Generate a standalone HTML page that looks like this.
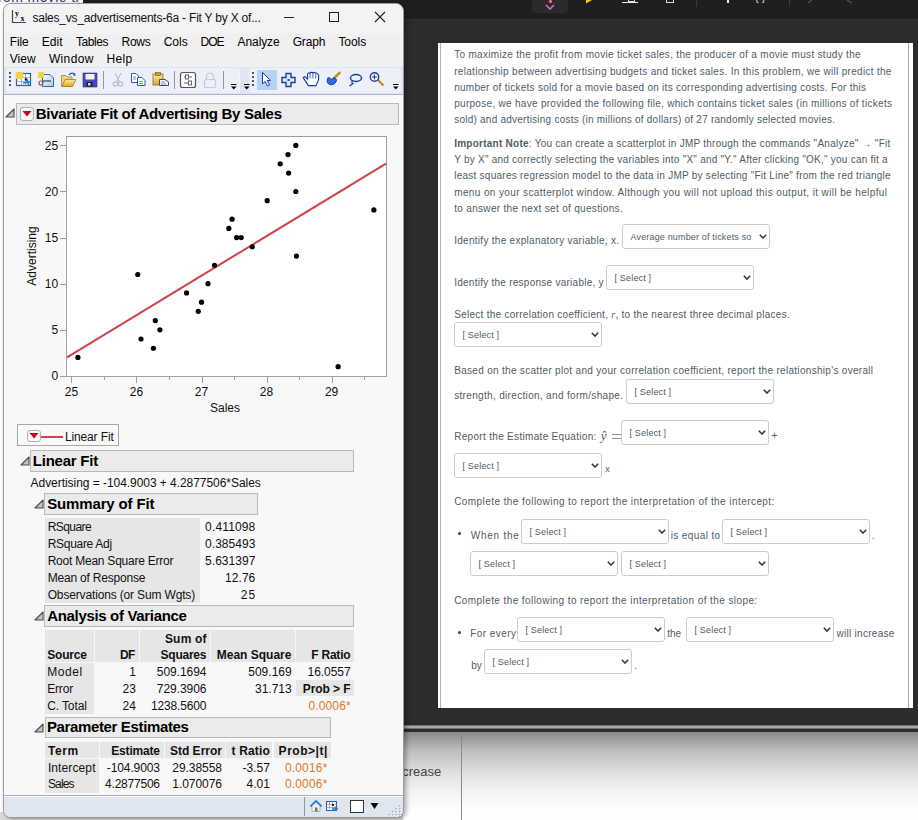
<!DOCTYPE html><html><head><meta charset="utf-8"><style>
html,body{margin:0;padding:0}
body{width:918px;height:820px;overflow:hidden;position:relative;background:#2c2c2c;font-family:"Liberation Sans",sans-serif}
div{box-sizing:border-box}
.sel{position:absolute;height:25px;width:148px;border:1px solid #c7cdd1;border-radius:3px;background:#fff}
.sel span{position:absolute;left:7px;top:5px;font-size:9.5px;color:#2d3b45;white-space:nowrap}
.sel svg{position:absolute;right:6px;top:9px}
</style></head><body>
<div style="position:absolute;left:0px;top:0px;width:918px;height:19px;background:#1f1f1f"></div>
<div style="position:absolute;left:403px;top:19px;width:515px;height:1px;background:#303030"></div>
<div style="position:absolute;left:0px;top:0px;width:83px;height:12px;background:#fff"></div>
<div style="position:absolute;left:0px;top:0px;width:12px;height:820px;background:#fff"></div>
<div style="position:absolute;left:0px;top:812px;width:403px;height:8px;background:#d9d9d9"></div>
<div style="position:absolute;left:0;top:0;width:83px;height:3px;overflow:hidden"><div style="position:absolute;left:-2px;top:-11px;font-size:14px;line-height:16px;color:#3b3b6b;white-space:nowrap;letter-spacing:0.4px">rom movie ti</div></div>
<div style="position:absolute;left:532px;top:0px;width:36px;height:13px;background:#2b2b2b;border-radius:0 0 4px 4px"></div>
<div style="position:absolute;left:549px;top:0px;width:2.5px;height:2.5px;background:#ff7070;border-radius:50%"></div>
<svg style="position:absolute;left:545px;top:4px" width="10" height="7"><path d="M1 1 L5 5 L9 1" fill="none" stroke="#d47ae0" stroke-width="1.3"/></svg>
<svg style="position:absolute;left:585px;top:0" width="8" height="4"><path d="M1 0 L7 0 L1 3.5 Z" fill="#f0d020"/></svg>
<div style="position:absolute;left:622px;top:2px;width:16px;height:1px;background:#eee"></div>
<div style="position:absolute;left:628px;top:0px;width:7px;height:2px;border:1px solid #ddd;border-top:none"></div>
<div style="position:absolute;left:666px;top:0px;width:8px;height:3px;border:1px solid #ddd;border-top:none"></div>
<div style="position:absolute;left:696px;top:0px;width:1px;height:7px;background:#3c3c3c"></div>
<div style="position:absolute;left:727px;top:0px;width:1.5px;height:3px;background:#eee"></div>
<div style="position:absolute;left:755px;top:-9px;font-size:11px;color:#ddd;letter-spacing:3px">{}</div>
<div style="position:absolute;left:789px;top:0px;width:1px;height:6px;background:#3c3c3c"></div>
<svg style="position:absolute;left:806px;top:0" width="50" height="5"><path d="M2 3 L6 0 M41 0 L46 3" stroke="#666" stroke-width="1"/></svg>
<div style="position:absolute;left:438px;top:43px;width:475px;height:665px;background:#fff"></div>
<div style="position:absolute;left:440px;top:43px;width:1px;height:665px;background:#b4b4b4"></div>
<div style="position:absolute;left:908px;top:43px;width:1px;height:665px;background:#a8a8a8"></div>
<div style="position:absolute;left:403px;top:725px;width:515px;height:4px;background:linear-gradient(#555,#c4c4c4 50%,#555)"></div>
<div style="position:absolute;left:403px;top:732px;width:515px;height:88px;background:linear-gradient(#888 0%,#bcbcbc 20%,#dcdcdc 43%,#f2f2f2 66%,#fdfdfd 89%,#fff 100%)"></div>
<div style="position:absolute;left:461px;top:732px;width:1px;height:88px;background:#8a8a8a"></div>
<div style="position:absolute;top:765.24px;font-size:13px;line-height:14.95px;color:#444;font-weight:normal;white-space:nowrap;left:402.20px;">crease</div>
<div style="position:absolute;top:48.95px;font-size:10px;line-height:11.50px;color:#505b65;font-weight:normal;white-space:nowrap;letter-spacing:0.309px;left:454.20px;">To maximize the profit from movie ticket sales, the producer of a movie must study the</div>
<div style="position:absolute;top:65.95px;font-size:10px;line-height:11.50px;color:#505b65;font-weight:normal;white-space:nowrap;letter-spacing:0.305px;left:454.20px;">relationship between advertising budgets and ticket sales. In this problem, we will predict the</div>
<div style="position:absolute;top:81.95px;font-size:10px;line-height:11.50px;color:#505b65;font-weight:normal;white-space:nowrap;letter-spacing:0.266px;left:454.20px;">number of tickets sold for a movie based on its corresponding advertising costs. For this</div>
<div style="position:absolute;top:97.95px;font-size:10px;line-height:11.50px;color:#505b65;font-weight:normal;white-space:nowrap;letter-spacing:0.293px;left:454.20px;">purpose, we have provided the following file, which contains ticket sales (in millions of tickets</div>
<div style="position:absolute;top:113.95px;font-size:10px;line-height:11.50px;color:#505b65;font-weight:normal;white-space:nowrap;letter-spacing:0.235px;left:454.20px;">sold) and advertising costs (in millions of dollars) of 27 randomly selected movies.</div>
<div style="position:absolute;top:137.95px;font-size:10px;line-height:11.50px;color:#505b65;font-weight:normal;white-space:nowrap;letter-spacing:0.251px;left:454.20px;"><b>Important Note</b>: You can create a scatterplot in JMP through the commands "Analyze" &#8594; "Fit</div>
<div style="position:absolute;top:153.95px;font-size:10px;line-height:11.50px;color:#505b65;font-weight:normal;white-space:nowrap;letter-spacing:0.239px;left:454.20px;">Y by X" and correctly selecting the variables into "X" and "Y." After clicking "OK," you can fit a</div>
<div style="position:absolute;top:169.95px;font-size:10px;line-height:11.50px;color:#505b65;font-weight:normal;white-space:nowrap;letter-spacing:0.253px;left:454.20px;">least squares regression model to the data in JMP by selecting "Fit Line" from the red triangle</div>
<div style="position:absolute;top:186.95px;font-size:10px;line-height:11.50px;color:#505b65;font-weight:normal;white-space:nowrap;letter-spacing:0.384px;left:454.20px;">menu on your scatterplot window. Although you will not upload this output, it will be helpful</div>
<div style="position:absolute;top:202.95px;font-size:10px;line-height:11.50px;color:#505b65;font-weight:normal;white-space:nowrap;letter-spacing:0.319px;left:454.20px;">to answer the next set of questions.</div>
<div style="position:absolute;top:234.95px;font-size:10px;line-height:11.50px;color:#505b65;font-weight:normal;white-space:nowrap;letter-spacing:0.285px;left:454.20px;">Identify the explanatory variable, x.</div>
<div class="sel" style="left:622px;top:224px;width:148px"></div>
<div style="position:absolute;top:231.85px;font-size:9px;line-height:10.35px;color:#505b65;font-weight:normal;white-space:nowrap;letter-spacing:0.166px;left:630.50px;">Average number of tickets so</div>
<svg style="position:absolute;left:759px;top:234px" width="8" height="5" viewBox="0 0 8 5"><path d="M0.8 0.8 L4 4 L7.2 0.8" stroke="#2d3b45" stroke-width="1.6" fill="none"/></svg>
<div style="position:absolute;top:276.95px;font-size:10px;line-height:11.50px;color:#505b65;font-weight:normal;white-space:nowrap;letter-spacing:0.256px;left:454.20px;">Identify the response variable, y</div>
<div class="sel" style="left:606px;top:265px;width:148px"></div>
<div style="position:absolute;top:272.86px;font-size:9px;line-height:10.35px;color:#505b65;font-weight:normal;white-space:nowrap;letter-spacing:0.176px;left:614.50px;">[ Select ]</div>
<svg style="position:absolute;left:743px;top:275px" width="8" height="5" viewBox="0 0 8 5"><path d="M0.8 0.8 L4 4 L7.2 0.8" stroke="#2d3b45" stroke-width="1.6" fill="none"/></svg>
<div style="position:absolute;top:308.95px;font-size:10px;line-height:11.50px;color:#505b65;font-weight:normal;white-space:nowrap;letter-spacing:0.277px;left:454.20px;">Select the correlation coefficient, <i style="font-family:Liberation Serif">r</i>, to the nearest three decimal places.</div>
<div class="sel" style="left:454px;top:322px;width:148px"></div>
<div style="position:absolute;top:329.86px;font-size:9px;line-height:10.35px;color:#505b65;font-weight:normal;white-space:nowrap;letter-spacing:0.176px;left:462.50px;">[ Select ]</div>
<svg style="position:absolute;left:591px;top:332px" width="8" height="5" viewBox="0 0 8 5"><path d="M0.8 0.8 L4 4 L7.2 0.8" stroke="#2d3b45" stroke-width="1.6" fill="none"/></svg>
<div style="position:absolute;top:364.95px;font-size:10px;line-height:11.50px;color:#505b65;font-weight:normal;white-space:nowrap;letter-spacing:0.305px;left:454.20px;">Based on the scatter plot and your correlation coefficient, report the relationship's overall</div>
<div style="position:absolute;top:389.95px;font-size:10px;line-height:11.50px;color:#505b65;font-weight:normal;white-space:nowrap;letter-spacing:0.328px;left:454.20px;">strength, direction, and form/shape.</div>
<div class="sel" style="left:626px;top:379px;width:148px"></div>
<div style="position:absolute;top:386.86px;font-size:9px;line-height:10.35px;color:#505b65;font-weight:normal;white-space:nowrap;letter-spacing:0.176px;left:634.50px;">[ Select ]</div>
<svg style="position:absolute;left:763px;top:389px" width="8" height="5" viewBox="0 0 8 5"><path d="M0.8 0.8 L4 4 L7.2 0.8" stroke="#2d3b45" stroke-width="1.6" fill="none"/></svg>
<div style="position:absolute;top:430.95px;font-size:10px;line-height:11.50px;color:#505b65;font-weight:normal;white-space:nowrap;letter-spacing:0.314px;left:454.20px;">Report the Estimate Equation:</div>
<div style="position:absolute;top:429.24px;font-size:13px;line-height:14.95px;color:#505b65;font-weight:normal;white-space:nowrap;font-family:'Liberation Serif';left:600.70px;"><i>ŷ</i></div>
<svg style="position:absolute;left:611px;top:433px" width="11" height="8"><path d="M1 1.5 H10 M1 5.5 H10" stroke="#8a9299" stroke-width="1"/></svg>
<div class="sel" style="left:621px;top:420px;width:148px"></div>
<div style="position:absolute;top:427.86px;font-size:9px;line-height:10.35px;color:#505b65;font-weight:normal;white-space:nowrap;letter-spacing:0.176px;left:629.50px;">[ Select ]</div>
<svg style="position:absolute;left:758px;top:430px" width="8" height="5" viewBox="0 0 8 5"><path d="M0.8 0.8 L4 4 L7.2 0.8" stroke="#2d3b45" stroke-width="1.6" fill="none"/></svg>
<div style="position:absolute;top:429.05px;font-size:11px;line-height:12.65px;color:#505b65;font-weight:normal;white-space:nowrap;left:771.20px;">+</div>
<div class="sel" style="left:454px;top:453px;width:148px"></div>
<div style="position:absolute;top:460.86px;font-size:9px;line-height:10.35px;color:#505b65;font-weight:normal;white-space:nowrap;letter-spacing:0.176px;left:462.50px;">[ Select ]</div>
<svg style="position:absolute;left:591px;top:463px" width="8" height="5" viewBox="0 0 8 5"><path d="M0.8 0.8 L4 4 L7.2 0.8" stroke="#2d3b45" stroke-width="1.6" fill="none"/></svg>
<div style="position:absolute;top:463.86px;font-size:9px;line-height:10.35px;color:#505b65;font-weight:normal;white-space:nowrap;left:605.20px;">x</div>
<div style="position:absolute;top:495.95px;font-size:10px;line-height:11.50px;color:#505b65;font-weight:normal;white-space:nowrap;letter-spacing:0.433px;left:454.20px;">Complete the following to report the interpretation of the intercept:</div>
<div style="position:absolute;left:458px;top:532px;width:3px;height:3px;background:#2d3b45;border-radius:50%"></div>
<div style="position:absolute;top:529.95px;font-size:10px;line-height:11.50px;color:#505b65;font-weight:normal;white-space:nowrap;letter-spacing:0.755px;left:470.80px;">When the</div>
<div class="sel" style="left:521px;top:519px;width:148px"></div>
<div style="position:absolute;top:526.86px;font-size:9px;line-height:10.35px;color:#505b65;font-weight:normal;white-space:nowrap;letter-spacing:0.176px;left:529.50px;">[ Select ]</div>
<svg style="position:absolute;left:658px;top:529px" width="8" height="5" viewBox="0 0 8 5"><path d="M0.8 0.8 L4 4 L7.2 0.8" stroke="#2d3b45" stroke-width="1.6" fill="none"/></svg>
<div style="position:absolute;top:529.95px;font-size:10px;line-height:11.50px;color:#505b65;font-weight:normal;white-space:nowrap;letter-spacing:0.391px;left:670.70px;">is equal to</div>
<div class="sel" style="left:722px;top:519px;width:148px"></div>
<div style="position:absolute;top:526.86px;font-size:9px;line-height:10.35px;color:#505b65;font-weight:normal;white-space:nowrap;letter-spacing:0.176px;left:730.50px;">[ Select ]</div>
<svg style="position:absolute;left:859px;top:529px" width="8" height="5" viewBox="0 0 8 5"><path d="M0.8 0.8 L4 4 L7.2 0.8" stroke="#2d3b45" stroke-width="1.6" fill="none"/></svg>
<div style="position:absolute;top:529.95px;font-size:10px;line-height:11.50px;color:#505b65;font-weight:normal;white-space:nowrap;left:871.70px;">.</div>
<div class="sel" style="left:470px;top:551px;width:148px"></div>
<div style="position:absolute;top:558.86px;font-size:9px;line-height:10.35px;color:#505b65;font-weight:normal;white-space:nowrap;letter-spacing:0.176px;left:478.50px;">[ Select ]</div>
<svg style="position:absolute;left:607px;top:561px" width="8" height="5" viewBox="0 0 8 5"><path d="M0.8 0.8 L4 4 L7.2 0.8" stroke="#2d3b45" stroke-width="1.6" fill="none"/></svg>
<div class="sel" style="left:621px;top:551px;width:148px"></div>
<div style="position:absolute;top:558.86px;font-size:9px;line-height:10.35px;color:#505b65;font-weight:normal;white-space:nowrap;letter-spacing:0.176px;left:629.50px;">[ Select ]</div>
<svg style="position:absolute;left:758px;top:561px" width="8" height="5" viewBox="0 0 8 5"><path d="M0.8 0.8 L4 4 L7.2 0.8" stroke="#2d3b45" stroke-width="1.6" fill="none"/></svg>
<div style="position:absolute;top:594.95px;font-size:10px;line-height:11.50px;color:#505b65;font-weight:normal;white-space:nowrap;letter-spacing:0.417px;left:454.20px;">Complete the following to report the interpretation of the slope:</div>
<div style="position:absolute;left:458px;top:631px;width:3px;height:3px;background:#2d3b45;border-radius:50%"></div>
<div style="position:absolute;top:627.95px;font-size:10px;line-height:11.50px;color:#505b65;font-weight:normal;white-space:nowrap;letter-spacing:0.446px;left:470.20px;">For every</div>
<div class="sel" style="left:517px;top:617px;width:148px"></div>
<div style="position:absolute;top:624.86px;font-size:9px;line-height:10.35px;color:#505b65;font-weight:normal;white-space:nowrap;letter-spacing:0.176px;left:525.50px;">[ Select ]</div>
<svg style="position:absolute;left:654px;top:627px" width="8" height="5" viewBox="0 0 8 5"><path d="M0.8 0.8 L4 4 L7.2 0.8" stroke="#2d3b45" stroke-width="1.6" fill="none"/></svg>
<div style="position:absolute;top:627.95px;font-size:10px;line-height:11.50px;color:#505b65;font-weight:normal;white-space:nowrap;left:667.20px;">the</div>
<div class="sel" style="left:686px;top:617px;width:148px"></div>
<div style="position:absolute;top:624.86px;font-size:9px;line-height:10.35px;color:#505b65;font-weight:normal;white-space:nowrap;letter-spacing:0.176px;left:694.50px;">[ Select ]</div>
<svg style="position:absolute;left:823px;top:627px" width="8" height="5" viewBox="0 0 8 5"><path d="M0.8 0.8 L4 4 L7.2 0.8" stroke="#2d3b45" stroke-width="1.6" fill="none"/></svg>
<div style="position:absolute;top:627.95px;font-size:10px;line-height:11.50px;color:#505b65;font-weight:normal;white-space:nowrap;letter-spacing:0.286px;left:836.50px;">will increase</div>
<div style="position:absolute;top:659.95px;font-size:10px;line-height:11.50px;color:#505b65;font-weight:normal;white-space:nowrap;left:471.20px;">by</div>
<div class="sel" style="left:484px;top:649px;width:148px"></div>
<div style="position:absolute;top:656.86px;font-size:9px;line-height:10.35px;color:#505b65;font-weight:normal;white-space:nowrap;letter-spacing:0.176px;left:492.50px;">[ Select ]</div>
<svg style="position:absolute;left:621px;top:659px" width="8" height="5" viewBox="0 0 8 5"><path d="M0.8 0.8 L4 4 L7.2 0.8" stroke="#2d3b45" stroke-width="1.6" fill="none"/></svg>
<div style="position:absolute;top:659.95px;font-size:10px;line-height:11.50px;color:#505b65;font-weight:normal;white-space:nowrap;left:634.20px;">.</div>
<div style="position:absolute;left:3px;top:3px;width:401px;height:815px;border:1px solid #9a9a9a;border-radius:8px;background:#f8f8f8;overflow:hidden;box-shadow:2px 1px 5px rgba(0,0,0,0.35)">
<div style="position:absolute;left:0px;top:0px;width:400px;height:30px;background:#f3f3f3"></div>
<div style="position:absolute;left:0px;top:30px;width:400px;height:34px;background:#f0f0f0"></div>
<div style="position:absolute;left:0px;top:791px;width:400px;height:24px;background:#e0e6f0;border-top:1px solid #a5b0d0;box-shadow:inset 0 1px 0 #fff"></div>
</div>
<div style="position:absolute;top:12.14px;font-size:12px;line-height:13.80px;color:#111;font-weight:normal;white-space:nowrap;letter-spacing:-0.211px;left:32.40px;">sales_vs_advertisements-6a - Fit Y by X of...</div>
<svg style="position:absolute;left:10px;top:8px" width="20" height="17"><path d="M2.5 2 V14.5 H16" fill="none" stroke="#2a4a80" stroke-width="1.2"/><text x="5" y="7.5" font-family="Liberation Serif" font-weight="bold" font-size="8" fill="#000">y</text><text x="10.5" y="13" font-family="Liberation Serif" font-weight="bold" font-size="8" fill="#000">x</text></svg>
<div style="position:absolute;top:36.14px;font-size:12px;line-height:13.80px;color:#000;font-weight:normal;white-space:nowrap;letter-spacing:-0.115px;left:9.70px;">File</div>
<div style="position:absolute;top:36.14px;font-size:12px;line-height:13.80px;color:#000;font-weight:normal;white-space:nowrap;letter-spacing:0.038px;left:41.70px;">Edit</div>
<div style="position:absolute;top:36.14px;font-size:12px;line-height:13.80px;color:#000;font-weight:normal;white-space:nowrap;letter-spacing:-0.398px;left:75.90px;">Tables</div>
<div style="position:absolute;top:36.14px;font-size:12px;line-height:13.80px;color:#000;font-weight:normal;white-space:nowrap;letter-spacing:-0.305px;left:121.60px;">Rows</div>
<div style="position:absolute;top:36.14px;font-size:12px;line-height:13.80px;color:#000;font-weight:normal;white-space:nowrap;letter-spacing:-0.005px;left:163.70px;">Cols</div>
<div style="position:absolute;top:36.14px;font-size:12px;line-height:13.80px;color:#000;font-weight:normal;white-space:nowrap;letter-spacing:-0.958px;left:200.50px;">DOE</div>
<div style="position:absolute;top:36.14px;font-size:12px;line-height:13.80px;color:#000;font-weight:normal;white-space:nowrap;letter-spacing:-0.101px;left:237.60px;">Analyze</div>
<div style="position:absolute;top:36.14px;font-size:12px;line-height:13.80px;color:#000;font-weight:normal;white-space:nowrap;letter-spacing:-0.165px;left:292.70px;">Graph</div>
<div style="position:absolute;top:36.14px;font-size:12px;line-height:13.80px;color:#000;font-weight:normal;white-space:nowrap;letter-spacing:-0.054px;left:338.40px;">Tools</div>
<div style="position:absolute;top:53.14px;font-size:12px;line-height:13.80px;color:#000;font-weight:normal;white-space:nowrap;letter-spacing:0.068px;left:9.70px;">View</div>
<div style="position:absolute;top:53.14px;font-size:12px;line-height:13.80px;color:#000;font-weight:normal;white-space:nowrap;letter-spacing:0.362px;left:48.90px;">Window</div>
<div style="position:absolute;top:53.14px;font-size:12px;line-height:13.80px;color:#000;font-weight:normal;white-space:nowrap;letter-spacing:0.304px;left:106.60px;">Help</div>
<div style="position:absolute;left:284px;top:17px;width:10px;height:1px;background:#222"></div>
<div style="position:absolute;left:329px;top:12px;width:10px;height:10px;border:1px solid #222"></div>
<svg style="position:absolute;left:374px;top:11px" width="12" height="12"><path d="M1 1 L11 11 M11 1 L1 11" stroke="#222" stroke-width="1.1"/></svg>
<div style="position:absolute;left:4px;top:67px;width:399px;height:28px;background:#dfe5f3;border-bottom:1px solid #a9b4d6"></div>
<div style="position:absolute;left:6px;top:68px;width:233px;height:25px;background:#edf0f8;border-radius:4px"></div>
<div style="position:absolute;left:249px;top:68px;width:152px;height:25px;background:#edf0f8;border-radius:4px"></div>
<div style="position:absolute;left:239px;top:68px;width:1px;height:25px;background:#f4f6fb"></div>
<div style="position:absolute;left:9px;top:72px;width:2px;height:2px;background:#555"></div>
<div style="position:absolute;left:9px;top:76px;width:2px;height:2px;background:#555"></div>
<div style="position:absolute;left:9px;top:80px;width:2px;height:2px;background:#555"></div>
<div style="position:absolute;left:9px;top:84px;width:2px;height:2px;background:#555"></div>
<div style="position:absolute;left:252px;top:72px;width:2px;height:2px;background:#555"></div>
<div style="position:absolute;left:252px;top:76px;width:2px;height:2px;background:#555"></div>
<div style="position:absolute;left:252px;top:80px;width:2px;height:2px;background:#555"></div>
<div style="position:absolute;left:252px;top:84px;width:2px;height:2px;background:#555"></div>
<div style="position:absolute;left:257px;top:70px;width:20px;height:20px;background:#b3d4f7"></div>
<svg style="position:absolute;left:0;top:0" width="918" height="100"><defs><linearGradient id="fy" x1="0" y1="0" x2="0" y2="1"><stop offset="0" stop-color="#fbe7a0"/><stop offset="1" stop-color="#e0a820"/></linearGradient><linearGradient id="dc" x1="0" y1="0" x2="1" y2="1"><stop offset="0" stop-color="#ffffff"/><stop offset="1" stop-color="#a9c8ec"/></linearGradient></defs><rect x="16.5" y="73.5" width="14" height="12" fill="#fff" stroke="#1e5fb0" stroke-width="1.2"/><path d="M16.5 77.5 H30.5 M16.5 81.5 H30.5" stroke="#f08080" stroke-width="0.8"/><path d="M21.5 73.5 V85.5 M25.5 73.5 V85.5" stroke="#6a9ad8" stroke-width="0.8"/><rect x="16" y="72" width="7" height="7" fill="#f5d24a"/><circle cx="26" cy="79.5" r="1.3" fill="#000"/><path d="M23 83 L31 82 M27 79 L29 86" stroke="#1e7fd0" stroke-width="1.6"/><path d="M42.5 74.5 H50 L53.5 78 V86.5 H42.5 Z" fill="url(#dc)" stroke="#2a6ab8" stroke-width="1"/><rect x="38" y="72" width="6" height="6" fill="#f5d24a"/><circle cx="41" cy="83" r="2" fill="none" stroke="#666" stroke-width="1.2"/><path d="M42 81 L51 81" stroke="#555" stroke-width="1.4"/><path d="M61.5 75.5 H66 L67.5 77 H72 V86.5 H61.5 Z" fill="#f2d47a" stroke="#a08030" stroke-width="0.8"/><path d="M62 86.5 L65 79.5 H76 L72.5 86.5 Z" fill="url(#fy)" stroke="#a07820" stroke-width="0.8"/><path d="M69 75 Q72 71.5 75 74.5" stroke="#2a5a9a" stroke-width="1.3" fill="none"/><path d="M74 72.5 L76 75.5 L73 75.5 Z" fill="#2a5a9a"/><rect x="83" y="73" width="14" height="14" fill="#4848b8" stroke="#303090" stroke-width="0.6"/><rect x="85.5" y="74" width="9" height="5.5" fill="#eef2ff"/><rect x="86.5" y="82" width="6" height="4.5" fill="#222"/><rect x="88" y="83" width="2.5" height="2.5" fill="#ddd"/><line x1="103.5" y1="71" x2="103.5" y2="89" stroke="#8f94ad" stroke-width="1"/><line x1="174.5" y1="71" x2="174.5" y2="89" stroke="#8f94ad" stroke-width="1"/><line x1="223.5" y1="71" x2="223.5" y2="89" stroke="#8f94ad" stroke-width="1"/><path d="M115 73 L119.5 82 M121 73 L116.5 82" stroke="#b8c4d8" stroke-width="1.3"/><circle cx="115.5" cy="84" r="2.2" fill="none" stroke="#b0c0d8" stroke-width="1.2"/><circle cx="120.5" cy="84" r="2.2" fill="none" stroke="#b0c0d8" stroke-width="1.2"/><path d="M131.5 73.5 H136 L138.5 76 V82.5 H131.5 Z" fill="#fff" stroke="#2a5aa8" stroke-width="1"/><path d="M137.5 77.5 H142 L145 80.5 V85.5 H137.5 Z" fill="#fff" stroke="#2a5aa8" stroke-width="1"/><path d="M133 77 H136 M133 79 H136 M139 81.5 H143 M139 83.5 H143" stroke="#4a7ac8" stroke-width="0.8"/><rect x="153" y="74" width="10" height="11" fill="url(#fy)" stroke="#8a6a20" stroke-width="0.8"/><rect x="155.5" y="72.5" width="5" height="3" fill="#c9a040" stroke="#6a5010" stroke-width="0.6"/><path d="M159.5 79.5 H165 L168.5 82 V85.5 H159.5 Z" fill="#eef3fb" stroke="#3a3a5a" stroke-width="0.9"/><path d="M161 82 H165 M161 84 H166" stroke="#5a7ab8" stroke-width="0.7"/><rect x="180.5" y="72.5" width="15" height="15" rx="2" fill="#fff" stroke="#555" stroke-width="1.2"/><path d="M184 77 H192 M184 83 H192" stroke="#666" stroke-width="1"/><rect x="185.5" y="75" width="3" height="4" fill="#fff" stroke="#555" stroke-width="0.9"/><rect x="188.5" y="81" width="3" height="4" fill="#fff" stroke="#555" stroke-width="0.9"/><rect x="204.5" y="79.5" width="11" height="8" rx="1" fill="none" stroke="#c9cbd2" stroke-width="1.2"/><path d="M206.5 79.5 V76.5 A3.5 3.5 0 0 1 213.5 76.5 V79.5" fill="none" stroke="#c9cbd2" stroke-width="1.2"/><path d="M231 84.5 H236.5" stroke="#000" stroke-width="1"/><path d="M231 86.5 H236.5 L233.75 89.5 Z" fill="#000"/><path d="M244 84.5 H249.5" stroke="#000" stroke-width="1"/><path d="M244 86.5 H249.5 L246.75 89.5 Z" fill="#000"/><path d="M393 84.5 H398.5" stroke="#000" stroke-width="1"/><path d="M393 86.5 H398.5 L395.75 89.5 Z" fill="#000"/><path d="M262.5 72.5 L262.5 84 L265 81.5 L267.5 86 L269.5 85 L267.3 80.5 L270.5 80.5 Z" fill="#fff" stroke="#1a3e9a" stroke-width="1"/><path d="M286 73.5 H291 V77.5 H295 V82.5 H291 V86.5 H286 V82.5 H282 V77.5 H286 Z" fill="#dde8f8" stroke="#1a3e9a" stroke-width="1.4"/><rect x="287.5" y="79" width="2" height="2" fill="#1a3e9a"/><path d="M303.2 77.6 L305 76.6 L307.6 79.2 V74 Q308.6 72.2 309.8 73.4 Q311.2 71.6 312.6 73 Q314.2 71.6 315.6 73 Q317.6 72.6 318.6 75.4 V79.6 L316 85.6 H308.4 Z" fill="#fbfbfb" stroke="#1538a8" stroke-width="1.1" stroke-linejoin="round"/><path d="M310 73.6 V78.4 M312.9 73.2 V78.4 M315.7 73.4 V78.4" stroke="#3a60c8" stroke-width="0.9"/><path d="M334 78.2 L339.6 72.8" stroke="#c8901c" stroke-width="2.6" stroke-linecap="round"/><path d="M327.6 78 Q325.8 84.2 331 84.8 Q335.8 84.6 336.6 79.8 L334.4 77.4 Q331.4 80.8 329.4 77.6 Z" fill="#2d6be0" stroke="#0f3aa8" stroke-width="0.9"/><ellipse cx="356" cy="78" rx="5.5" ry="3.5" fill="none" stroke="#1a3e9a" stroke-width="1.4"/><path d="M352.5 80.5 Q351 83 353 83.5 L349.5 86" stroke="#1a3e9a" stroke-width="1.2" fill="none"/><path d="M378 80 L383.5 85.5" stroke="#c08a20" stroke-width="2.2"/><circle cx="374.5" cy="77" r="4.2" fill="#fff" stroke="#1a3e9a" stroke-width="1.4"/><path d="M372 77 H377 M374.5 74.5 V79.5" stroke="#1a3e9a" stroke-width="1.2"/></svg>
<div style="position:absolute;left:16px;top:103px;width:383px;height:22px;background:#ebebeb;border:1px solid #b9b9b9"></div>
<svg style="position:absolute;left:5px;top:108px" width="10" height="10"><path d="M1 9 L9 9 L9 1 Z" fill="#c4c4c4" stroke="#4a4a4a" stroke-width="1.1" stroke-linejoin="round"/></svg>
<div style="position:absolute;left:20px;top:107px;width:14px;height:14px;background:#fafafa;border:1px solid #b0b0b0;border-radius:3px"></div>
<svg style="position:absolute;left:22px;top:111px" width="10" height="6"><path d="M0.5 0 L9.5 0 L5 5.5 Z" fill="#d4001a"/></svg>
<div style="position:absolute;top:105.42px;font-size:15px;line-height:17.25px;color:#000;font-weight:bold;white-space:nowrap;letter-spacing:-0.301px;left:35.80px;">Bivariate Fit of Advertising By Sales</div>
<div style="position:absolute;left:17px;top:424px;width:102px;height:22px;background:#f9f9f9;border:1px solid #a8a8a8"></div>
<div style="position:absolute;left:27px;top:430px;width:14px;height:12px;background:#fafafa;border:1px solid #b0b0b0;border-radius:3px"></div>
<svg style="position:absolute;left:29px;top:433px" width="10" height="6"><path d="M0.5 0 L9.5 0 L5 5.5 Z" fill="#d4001a"/></svg>
<div style="position:absolute;left:41px;top:436px;width:22px;height:2px;background:#d0414f"></div>
<div style="position:absolute;top:431.14px;font-size:12px;line-height:13.80px;color:#111;font-weight:normal;white-space:nowrap;letter-spacing:-0.126px;left:64.90px;">Linear Fit</div>
<div style="position:absolute;left:30px;top:450px;width:324px;height:22px;background:#ebebeb;border:1px solid #b9b9b9"></div>
<svg style="position:absolute;left:20px;top:456px" width="10" height="10"><path d="M1 9 L9 9 L9 1 Z" fill="#c4c4c4" stroke="#4a4a4a" stroke-width="1.1" stroke-linejoin="round"/></svg>
<div style="position:absolute;top:452.43px;font-size:15px;line-height:17.25px;color:#000;font-weight:bold;white-space:nowrap;letter-spacing:-0.235px;left:32.80px;">Linear Fit</div>
<div style="position:absolute;top:477.14px;font-size:12px;line-height:13.80px;color:#111;font-weight:normal;white-space:nowrap;letter-spacing:-0.049px;left:30.60px;">Advertising = -104.9003 + 4.2877506*Sales</div>
<div style="position:absolute;left:44px;top:493px;width:214px;height:22px;background:#ebebeb;border:1px solid #b9b9b9"></div>
<svg style="position:absolute;left:34px;top:499px" width="10" height="10"><path d="M1 9 L9 9 L9 1 Z" fill="#c4c4c4" stroke="#4a4a4a" stroke-width="1.1" stroke-linejoin="round"/></svg>
<div style="position:absolute;top:495.43px;font-size:15px;line-height:17.25px;color:#000;font-weight:bold;white-space:nowrap;letter-spacing:-0.145px;left:47.20px;">Summary of Fit</div>
<div style="position:absolute;left:45px;top:518px;width:155px;height:85px;background:#e6e6e6"></div>
<div style="position:absolute;top:521.14px;font-size:12px;line-height:13.80px;color:#111;font-weight:normal;white-space:nowrap;letter-spacing:-0.562px;left:47.70px;">RSquare</div>
<div style="position:absolute;top:521.14px;font-size:12px;line-height:13.80px;color:#111;font-weight:normal;white-space:nowrap;letter-spacing:0.147px;right:662.55px;">0.411098</div>
<div style="position:absolute;top:538.14px;font-size:12px;line-height:13.80px;color:#111;font-weight:normal;white-space:nowrap;letter-spacing:-0.299px;left:47.70px;">RSquare Adj</div>
<div style="position:absolute;top:538.14px;font-size:12px;line-height:13.80px;color:#111;font-weight:normal;white-space:nowrap;letter-spacing:0.020px;right:662.68px;">0.385493</div>
<div style="position:absolute;top:555.14px;font-size:12px;line-height:13.80px;color:#111;font-weight:normal;white-space:nowrap;letter-spacing:-0.235px;left:47.70px;">Root Mean Square Error</div>
<div style="position:absolute;top:555.14px;font-size:12px;line-height:13.80px;color:#111;font-weight:normal;white-space:nowrap;letter-spacing:0.020px;right:662.68px;">5.631397</div>
<div style="position:absolute;top:572.14px;font-size:12px;line-height:13.80px;color:#111;font-weight:normal;white-space:nowrap;letter-spacing:-0.196px;left:47.70px;">Mean of Response</div>
<div style="position:absolute;top:572.14px;font-size:12px;line-height:13.80px;color:#111;font-weight:normal;white-space:nowrap;letter-spacing:0.067px;right:662.63px;">12.76</div>
<div style="position:absolute;top:589.14px;font-size:12px;line-height:13.80px;color:#111;font-weight:normal;white-space:nowrap;letter-spacing:-0.155px;left:47.70px;">Observations (or Sum Wgts)</div>
<div style="position:absolute;top:589.14px;font-size:12px;line-height:13.80px;color:#111;font-weight:normal;white-space:nowrap;letter-spacing:1.241px;right:661.46px;">25</div>
<div style="position:absolute;left:44px;top:605px;width:310px;height:22px;background:#ebebeb;border:1px solid #b9b9b9"></div>
<svg style="position:absolute;left:34px;top:611px" width="10" height="10"><path d="M1 9 L9 9 L9 1 Z" fill="#c4c4c4" stroke="#4a4a4a" stroke-width="1.1" stroke-linejoin="round"/></svg>
<div style="position:absolute;top:607.42px;font-size:15px;line-height:17.25px;color:#000;font-weight:bold;white-space:nowrap;letter-spacing:-0.327px;left:47.20px;">Analysis of Variance</div>
<div style="position:absolute;left:45px;top:630px;width:49px;height:32px;background:#e6e6e6"></div>
<div style="position:absolute;left:95px;top:630px;width:44px;height:32px;background:#e6e6e6"></div>
<div style="position:absolute;left:140px;top:630px;width:70px;height:32px;background:#e6e6e6"></div>
<div style="position:absolute;left:211px;top:630px;width:84px;height:32px;background:#e6e6e6"></div>
<div style="position:absolute;left:296px;top:630px;width:58px;height:32px;background:#e6e6e6"></div>
<div style="position:absolute;left:45px;top:663px;width:49px;height:51px;background:#e6e6e6"></div>
<div style="position:absolute;left:296px;top:680px;width:58px;height:16px;background:#e6e6e6"></div>
<div style="position:absolute;top:649.14px;font-size:12px;line-height:13.80px;color:#111;font-weight:bold;white-space:nowrap;letter-spacing:-0.198px;left:47.20px;">Source</div>
<div style="position:absolute;top:649.14px;font-size:12px;line-height:13.80px;color:#111;font-weight:bold;white-space:nowrap;letter-spacing:-0.500px;right:783.10px;">DF</div>
<div style="position:absolute;top:633.14px;font-size:12px;line-height:13.80px;color:#111;font-weight:bold;white-space:nowrap;letter-spacing:0.186px;right:711.31px;">Sum of</div>
<div style="position:absolute;top:649.14px;font-size:12px;line-height:13.80px;color:#111;font-weight:bold;white-space:nowrap;letter-spacing:-0.227px;right:711.73px;">Squares</div>
<div style="position:absolute;top:649.14px;font-size:12px;line-height:13.80px;color:#111;font-weight:bold;white-space:nowrap;letter-spacing:-0.010px;right:626.61px;">Mean Square</div>
<div style="position:absolute;top:649.14px;font-size:12px;line-height:13.80px;color:#111;font-weight:bold;white-space:nowrap;letter-spacing:-0.212px;right:567.61px;">F Ratio</div>
<div style="position:absolute;top:666.14px;font-size:12px;line-height:13.80px;color:#111;font-weight:normal;white-space:nowrap;letter-spacing:0.553px;left:47.20px;">Model</div>
<div style="position:absolute;top:666.14px;font-size:12px;line-height:13.80px;color:#111;font-weight:normal;white-space:nowrap;right:782.20px;">1</div>
<div style="position:absolute;top:666.14px;font-size:12px;line-height:13.80px;color:#111;font-weight:normal;white-space:nowrap;letter-spacing:-0.052px;right:711.55px;">509.1694</div>
<div style="position:absolute;top:666.14px;font-size:12px;line-height:13.80px;color:#111;font-weight:normal;white-space:nowrap;letter-spacing:0.018px;right:626.28px;">509.169</div>
<div style="position:absolute;top:666.14px;font-size:12px;line-height:13.80px;color:#111;font-weight:normal;white-space:nowrap;letter-spacing:-0.048px;right:567.45px;">16.0557</div>
<div style="position:absolute;top:683.14px;font-size:12px;line-height:13.80px;color:#111;font-weight:normal;white-space:nowrap;letter-spacing:-0.168px;left:47.20px;">Error</div>
<div style="position:absolute;top:683.14px;font-size:12px;line-height:13.80px;color:#111;font-weight:normal;white-space:nowrap;right:782.20px;">23</div>
<div style="position:absolute;top:683.14px;font-size:12px;line-height:13.80px;color:#111;font-weight:normal;white-space:nowrap;letter-spacing:-0.052px;right:711.55px;">729.3906</div>
<div style="position:absolute;top:683.14px;font-size:12px;line-height:13.80px;color:#111;font-weight:normal;white-space:nowrap;right:626.30px;">31.713</div>
<div style="position:absolute;top:683.14px;font-size:12px;line-height:13.80px;color:#111;font-weight:bold;white-space:nowrap;letter-spacing:-0.063px;right:567.46px;">Prob &gt; F</div>
<div style="position:absolute;top:700.14px;font-size:12px;line-height:13.80px;color:#111;font-weight:normal;white-space:nowrap;letter-spacing:-0.110px;left:47.20px;">C. Total</div>
<div style="position:absolute;top:700.14px;font-size:12px;line-height:13.80px;color:#111;font-weight:normal;white-space:nowrap;right:782.20px;">24</div>
<div style="position:absolute;top:700.14px;font-size:12px;line-height:13.80px;color:#111;font-weight:normal;white-space:nowrap;letter-spacing:-0.142px;right:711.64px;">1238.5600</div>
<div style="position:absolute;top:700.14px;font-size:12px;line-height:13.80px;color:#e0782a;font-weight:normal;white-space:nowrap;letter-spacing:0.104px;right:567.30px;">0.0006*</div>
<div style="position:absolute;left:45px;top:717px;width:286px;height:21px;background:#ebebeb;border:1px solid #b9b9b9"></div>
<svg style="position:absolute;left:34px;top:723px" width="10" height="10"><path d="M1 9 L9 9 L9 1 Z" fill="#c4c4c4" stroke="#4a4a4a" stroke-width="1.1" stroke-linejoin="round"/></svg>
<div style="position:absolute;top:718.42px;font-size:15px;line-height:17.25px;color:#000;font-weight:bold;white-space:nowrap;letter-spacing:-0.357px;left:46.90px;">Parameter Estimates</div>
<div style="position:absolute;left:45px;top:742px;width:54px;height:16px;background:#e6e6e6"></div>
<div style="position:absolute;left:100px;top:742px;width:64px;height:16px;background:#e6e6e6"></div>
<div style="position:absolute;left:165px;top:742px;width:60px;height:16px;background:#e6e6e6"></div>
<div style="position:absolute;left:226px;top:742px;width:46px;height:16px;background:#e6e6e6"></div>
<div style="position:absolute;left:274px;top:742px;width:57px;height:16px;background:#e6e6e6"></div>
<div style="position:absolute;left:45px;top:759px;width:54px;height:34px;background:#e6e6e6"></div>
<div style="position:absolute;top:745.14px;font-size:12px;line-height:13.80px;color:#111;font-weight:bold;white-space:nowrap;letter-spacing:0.582px;left:47.90px;">Term</div>
<div style="position:absolute;top:745.14px;font-size:12px;line-height:13.80px;color:#111;font-weight:bold;white-space:nowrap;letter-spacing:-0.190px;right:758.19px;">Estimate</div>
<div style="position:absolute;top:745.14px;font-size:12px;line-height:13.80px;color:#111;font-weight:bold;white-space:nowrap;letter-spacing:0.011px;right:695.99px;">Std Error</div>
<div style="position:absolute;top:745.14px;font-size:12px;line-height:13.80px;color:#111;font-weight:bold;white-space:nowrap;letter-spacing:0.143px;right:648.06px;">t Ratio</div>
<div style="position:absolute;top:745.14px;font-size:12px;line-height:13.80px;color:#111;font-weight:bold;white-space:nowrap;letter-spacing:0.520px;right:590.18px;">Prob&gt;|t|</div>
<div style="position:absolute;top:762.14px;font-size:12px;line-height:13.80px;color:#111;font-weight:normal;white-space:nowrap;letter-spacing:0.112px;left:47.90px;">Intercept</div>
<div style="position:absolute;top:762.14px;font-size:12px;line-height:13.80px;color:#111;font-weight:normal;white-space:nowrap;letter-spacing:-0.106px;right:758.11px;">-104.9003</div>
<div style="position:absolute;top:762.14px;font-size:12px;line-height:13.80px;color:#111;font-weight:normal;white-space:nowrap;letter-spacing:-0.052px;right:696.05px;">29.38558</div>
<div style="position:absolute;top:762.14px;font-size:12px;line-height:13.80px;color:#111;font-weight:normal;white-space:nowrap;right:648.20px;">-3.57</div>
<div style="position:absolute;top:762.14px;font-size:12px;line-height:13.80px;color:#e0782a;font-weight:normal;white-space:nowrap;letter-spacing:0.171px;right:590.53px;">0.0016*</div>
<div style="position:absolute;top:778.14px;font-size:12px;line-height:13.80px;color:#111;font-weight:normal;white-space:nowrap;letter-spacing:-0.833px;left:47.90px;">Sales</div>
<div style="position:absolute;top:778.14px;font-size:12px;line-height:13.80px;color:#111;font-weight:normal;white-space:nowrap;letter-spacing:-0.229px;right:758.23px;">4.2877506</div>
<div style="position:absolute;top:778.14px;font-size:12px;line-height:13.80px;color:#111;font-weight:normal;white-space:nowrap;letter-spacing:-0.052px;right:696.05px;">1.070076</div>
<div style="position:absolute;top:778.14px;font-size:12px;line-height:13.80px;color:#111;font-weight:normal;white-space:nowrap;right:648.20px;">4.01</div>
<div style="position:absolute;top:778.14px;font-size:12px;line-height:13.80px;color:#e0782a;font-weight:normal;white-space:nowrap;letter-spacing:0.171px;right:590.53px;">0.0006*</div>
<svg style="position:absolute;left:0;top:790" width="410" height="30"><path d="M310.5 16.5 L316 11 L321.5 16.5" fill="none" stroke="#2a7ad0" stroke-width="1.8"/><path d="M312 16 V21.5 H320 V16 L316 12.5 Z" fill="#eaf2fb" stroke="#7aaee0" stroke-width="0.8"/><rect x="315" y="17.5" width="2.5" height="4" fill="#a86a20"/><rect x="326.5" y="11.5" width="10" height="9" fill="#fff" stroke="#2060b0" stroke-width="1"/><path d="M326.5 14.5 H336.5 M326.5 17.5 H336.5" stroke="#e07070" stroke-width="0.7"/><path d="M329.5 11.5 V20.5 M332.5 11.5 V20.5" stroke="#6a9ad8" stroke-width="0.7"/><circle cx="333" cy="15" r="1" fill="#000"/><path d="M332 19 L338 18.5 M335 16.5 L336 21" stroke="#1e7fd0" stroke-width="1.3"/><rect x="399" y="15" width="1.6" height="1.6" fill="#a8b4cc"/><rect x="400" y="16" width="1" height="1" fill="#fff"/><rect x="395.5" y="18" width="1.6" height="1.6" fill="#a8b4cc"/><rect x="396.5" y="19" width="1" height="1" fill="#fff"/><rect x="399" y="18" width="1.6" height="1.6" fill="#a8b4cc"/><rect x="400" y="19" width="1" height="1" fill="#fff"/><rect x="392" y="21" width="1.6" height="1.6" fill="#a8b4cc"/><rect x="393" y="22" width="1" height="1" fill="#fff"/><rect x="395.5" y="21" width="1.6" height="1.6" fill="#a8b4cc"/><rect x="396.5" y="22" width="1" height="1" fill="#fff"/><rect x="399" y="21" width="1.6" height="1.6" fill="#a8b4cc"/><rect x="400" y="22" width="1" height="1" fill="#fff"/><rect x="388.5" y="24" width="1.6" height="1.6" fill="#a8b4cc"/><rect x="389.5" y="25" width="1" height="1" fill="#fff"/><rect x="392" y="24" width="1.6" height="1.6" fill="#a8b4cc"/><rect x="393" y="25" width="1" height="1" fill="#fff"/><rect x="395.5" y="24" width="1.6" height="1.6" fill="#a8b4cc"/><rect x="396.5" y="25" width="1" height="1" fill="#fff"/><rect x="399" y="24" width="1.6" height="1.6" fill="#a8b4cc"/><rect x="400" y="25" width="1" height="1" fill="#fff"/></svg>
<div style="position:absolute;left:304px;top:797px;width:1px;height:19px;background:#8a96b0"></div>
<div style="position:absolute;left:350px;top:800px;width:14px;height:13px;background:#fff;border:1.5px solid #333"></div>
<svg style="position:absolute;left:370px;top:803px" width="10" height="6"><path d="M0.5 0 L8.5 0 L4.5 6 Z" fill="#000"/></svg>
<svg style="position:absolute;left:0;top:0" width="918" height="820"><rect x="66.5" y="136.5" width="320" height="240" fill="#fff" stroke="#a0a0a0" stroke-width="1"/><line x1="60" y1="376.5" x2="66" y2="376.5" stroke="#a0a0a0"/><line x1="60" y1="330.5" x2="66" y2="330.5" stroke="#a0a0a0"/><line x1="60" y1="284.5" x2="66" y2="284.5" stroke="#a0a0a0"/><line x1="60" y1="238.5" x2="66" y2="238.5" stroke="#a0a0a0"/><line x1="60" y1="191.5" x2="66" y2="191.5" stroke="#a0a0a0"/><line x1="60" y1="145.5" x2="66" y2="145.5" stroke="#a0a0a0"/><line x1="71.5" y1="377" x2="71.5" y2="383" stroke="#a0a0a0"/><line x1="104.5" y1="377" x2="104.5" y2="380" stroke="#a0a0a0"/><line x1="136.5" y1="377" x2="136.5" y2="383" stroke="#a0a0a0"/><line x1="169.5" y1="377" x2="169.5" y2="380" stroke="#a0a0a0"/><line x1="202.5" y1="377" x2="202.5" y2="383" stroke="#a0a0a0"/><line x1="234.5" y1="377" x2="234.5" y2="380" stroke="#a0a0a0"/><line x1="267.5" y1="377" x2="267.5" y2="383" stroke="#a0a0a0"/><line x1="299.5" y1="377" x2="299.5" y2="380" stroke="#a0a0a0"/><line x1="332.5" y1="377" x2="332.5" y2="383" stroke="#a0a0a0"/><line x1="364.5" y1="377" x2="364.5" y2="380" stroke="#a0a0a0"/><line x1="67" y1="357.43" x2="386" y2="163.56" stroke="#d0414f" stroke-width="2"/><circle cx="137.75" cy="274.48" r="2.6" fill="#000"/><circle cx="214.51" cy="265.26" r="2.6" fill="#000"/><circle cx="208.01" cy="283.70" r="2.6" fill="#000"/><circle cx="186.54" cy="292.92" r="2.6" fill="#000"/><circle cx="201.50" cy="302.14" r="2.6" fill="#000"/><circle cx="198.25" cy="311.36" r="2.6" fill="#000"/><circle cx="155.31" cy="320.58" r="2.6" fill="#000"/><circle cx="159.87" cy="329.80" r="2.6" fill="#000"/><circle cx="141.00" cy="339.02" r="2.6" fill="#000"/><circle cx="153.36" cy="348.24" r="2.6" fill="#000"/><circle cx="295.82" cy="145.40" r="2.6" fill="#000"/><circle cx="288.02" cy="154.62" r="2.6" fill="#000"/><circle cx="280.21" cy="163.84" r="2.6" fill="#000"/><circle cx="288.67" cy="173.06" r="2.6" fill="#000"/><circle cx="295.82" cy="191.50" r="2.6" fill="#000"/><circle cx="267.20" cy="200.72" r="2.6" fill="#000"/><circle cx="232.07" cy="219.16" r="2.6" fill="#000"/><circle cx="228.82" cy="228.38" r="2.6" fill="#000"/><circle cx="236.63" cy="237.60" r="2.6" fill="#000"/><circle cx="241.18" cy="237.60" r="2.6" fill="#000"/><circle cx="252.24" cy="246.82" r="2.6" fill="#000"/><circle cx="296.47" cy="256.04" r="2.6" fill="#000"/><circle cx="77.91" cy="357.46" r="2.6" fill="#000"/><circle cx="338.11" cy="366.68" r="2.6" fill="#000"/><circle cx="373.88" cy="209.94" r="2.6" fill="#000"/></svg>
<div style="position:absolute;top:370.14px;font-size:12px;line-height:13.80px;color:#111;font-weight:normal;white-space:nowrap;right:859.90px;">0</div>
<div style="position:absolute;top:324.14px;font-size:12px;line-height:13.80px;color:#111;font-weight:normal;white-space:nowrap;right:859.90px;">5</div>
<div style="position:absolute;top:278.14px;font-size:12px;line-height:13.80px;color:#111;font-weight:normal;white-space:nowrap;right:859.90px;">10</div>
<div style="position:absolute;top:232.14px;font-size:12px;line-height:13.80px;color:#111;font-weight:normal;white-space:nowrap;right:859.90px;">15</div>
<div style="position:absolute;top:186.14px;font-size:12px;line-height:13.80px;color:#111;font-weight:normal;white-space:nowrap;right:859.90px;">20</div>
<div style="position:absolute;top:140.14px;font-size:12px;line-height:13.80px;color:#111;font-weight:normal;white-space:nowrap;right:859.90px;">25</div>
<div style="position:absolute;top:386.14px;font-size:12px;line-height:13.80px;color:#111;font-weight:normal;white-space:nowrap;left:71.40px;transform:translateX(-50%);">25</div>
<div style="position:absolute;top:386.14px;font-size:12px;line-height:13.80px;color:#111;font-weight:normal;white-space:nowrap;left:136.45px;transform:translateX(-50%);">26</div>
<div style="position:absolute;top:386.14px;font-size:12px;line-height:13.80px;color:#111;font-weight:normal;white-space:nowrap;left:201.50px;transform:translateX(-50%);">27</div>
<div style="position:absolute;top:386.14px;font-size:12px;line-height:13.80px;color:#111;font-weight:normal;white-space:nowrap;left:266.55px;transform:translateX(-50%);">28</div>
<div style="position:absolute;top:386.14px;font-size:12px;line-height:13.80px;color:#111;font-weight:normal;white-space:nowrap;left:331.60px;transform:translateX(-50%);">29</div>
<div style="position:absolute;top:402.14px;font-size:12px;line-height:13.80px;color:#111;font-weight:normal;white-space:nowrap;left:225.00px;transform:translateX(-50%);">Sales</div>
<div style="position:absolute;left:32px;top:256px;font-size:12px;color:#111;white-space:nowrap;transform:translate(-50%,-50%) rotate(-90deg)">Advertising</div>
</body></html>
